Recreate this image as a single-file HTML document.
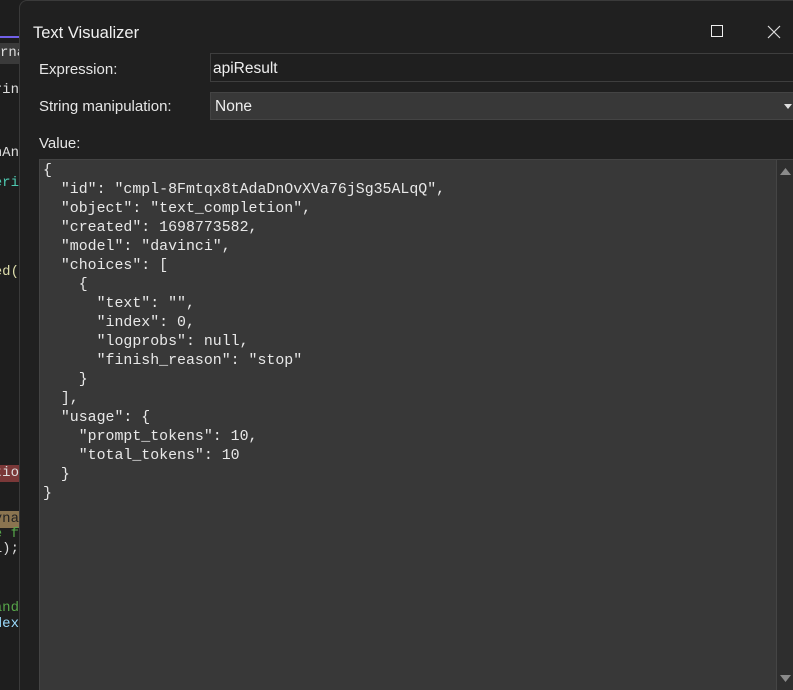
<!DOCTYPE html>
<html><head><style>
*{margin:0;padding:0;box-sizing:border-box}
body{width:793px;height:690px;overflow:hidden;background:#1e1e1e;position:relative;font-family:"Liberation Sans",sans-serif}
.code{position:absolute;left:0;top:0;width:19px;height:690px;background:#1e1e1e;font-family:"Liberation Mono",monospace;font-size:14px;overflow:hidden}
.code div{position:absolute;right:0;white-space:pre;height:17px;line-height:17px}
.dlg{position:absolute;left:19px;top:0;width:774px;height:690px;background:#202020;border-left:1px solid #3a3a3a;border-top:1px solid #3a3a3a;border-top-left-radius:8px;overflow:hidden}
.lbl{position:absolute;color:#e6e6e6;font-size:15px}
.mono{font-family:"Liberation Mono",monospace;font-size:14.9px;line-height:19px;color:#e8e8e8;white-space:pre}
</style></head><body>
<div class="code">
<div style="top:36px;height:2px;width:19px;background:#7160e8"></div>
<div style="top:43px;height:21px;width:19px;background:#3a3a3a;color:#ddd;line-height:21px">rna</div>
<div style="top:82px;color:#ddd">rin</div>
<div style="top:145px;color:#ddd">nAn</div>
<div style="top:175px;color:#4ec9b0">eri</div>
<div style="top:264px;color:#dcdcaa">ed(</div>
<div style="top:465px;height:17px;background:#7a3838;color:#ddd">tio</div>
<div style="top:511px;height:17px;background:#8a7450;color:#222">yna</div>
<div style="top:526px;color:#57a64a">e f</div>
<div style="top:541px;color:#ddd">1);</div>
<div style="top:600px;color:#57a64a">and</div>
<div style="top:616px;color:#9cdcfe">dex</div>
</div>
<div class="dlg">
<div class="lbl" style="left:13px;top:23px;font-size:16.5px;color:#f0f0f0">Text Visualizer</div>
<div style="position:absolute;left:691px;top:24px;width:12px;height:12px;border:1.3px solid #eee"></div>
<svg style="position:absolute;left:747px;top:24px" width="14" height="14"><path d="M1 1L13 13M13 1L1 13" stroke="#ddd" stroke-width="1.2"/></svg>
<div class="lbl" style="left:19px;top:60px">Expression:</div>
<div style="position:absolute;left:190px;top:52px;width:590px;height:29px;border:1px solid #3e3e3e;background:#1f1f1f;color:#eee;font-size:15.5px;padding:6px 0 0 2px">apiResult</div>
<div class="lbl" style="left:19px;top:97px">String manipulation:</div>
<div style="position:absolute;left:190px;top:91px;width:590px;height:28px;border:1px solid #444;background:#383838;color:#eee;font-size:15.5px;padding:5px 0 0 4px">None</div>
<svg style="position:absolute;left:764px;top:103px" width="8" height="6"><path d="M0 0H8L4 5Z" fill="#ddd"/></svg>
<div class="lbl" style="left:19px;top:134px">Value:</div>
<div style="position:absolute;left:19px;top:158px;width:756px;height:540px;background:#383838;border:1px solid #444"></div>
<div style="position:absolute;left:756px;top:159px;width:18px;height:540px;background:#2e2e2e;border-left:1px solid #454545"></div>
<svg style="position:absolute;left:760px;top:167px" width="11" height="7"><path d="M0 7H11L5.5 0Z" fill="#8a8a8a"/></svg>
<svg style="position:absolute;left:760px;top:674px" width="11" height="7"><path d="M0 0H11L5.5 7Z" fill="#8a8a8a"/></svg>
<div class="mono" style="position:absolute;left:23px;top:161px">{
  "id": "cmpl-8Fmtqx8tAdaDnOvXVa76jSg35ALqQ",
  "object": "text_completion",
  "created": 1698773582,
  "model": "davinci",
  "choices": [
    {
      "text": "",
      "index": 0,
      "logprobs": null,
      "finish_reason": "stop"
    }
  ],
  "usage": {
    "prompt_tokens": 10,
    "total_tokens": 10
  }
}</div>
</div>
</body></html>
